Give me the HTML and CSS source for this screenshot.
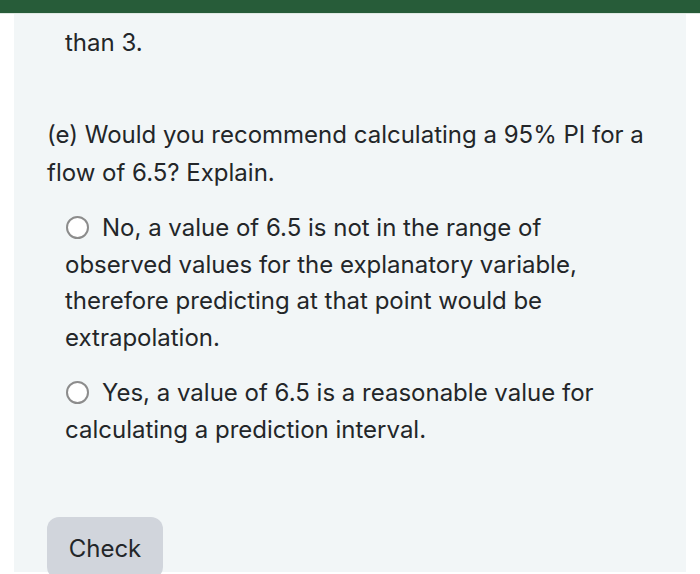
FILE: index.html
```html
<!DOCTYPE html>
<html lang="en">
<head>
<meta charset="utf-8">
<link rel="stylesheet" href="styles.css">
<title>Question</title>
</head>
<body>
<div class="topbar"></div>
<main class="panel">
  <p class="prev">than 3.</p>
  <p class="question">(e) Would you recommend calculating a 95% PI for a flow of 6.5? Explain.</p>
  <div class="options">
    <label class="option"><span class="radio"></span>No, a value of 6.5 is not in the range of observed values for the explanatory variable, therefore predicting at that point would be extrapolation.</label>
    <label class="option"><span class="radio"></span>Yes, a value of 6.5 is a reasonable value for calculating a prediction interval.</label>
  </div>
  <button class="check">Check</button>
</main>
</body>
</html>
```
FILE: styles.css
```css
html, body {
  margin: 0;
  padding: 0;
  background: #ffffff;
  height: 574px;
  overflow: hidden;
}
body {
  font-family: Inter, "Noto Sans", "Liberation Sans", sans-serif;
  color: #232629;
}
.topbar {
  height: 13px;
  background: #275c39;
  border-bottom: 1px solid #dfe9e3;
}
.panel {
  margin: 0 14px;
  background: #f2f6f7;
  padding: 14px 30px 0 33px;
  height: 558px;
  box-sizing: border-box;
}
.prev {
  margin: 0;
  padding-left: 18px;
  font-size: 24px;
  line-height: 30px;
}
.question {
  margin: 58px 0 0;
  font-size: 24px;
  line-height: 38px;
}
.options {
  display: flex;
  flex-direction: column;
  gap: 18px;
  margin-top: 18px;
  padding-left: 18px;
  padding-right: 46px;
}
.option {
  display: block;
  font-size: 24px;
  line-height: 36.7px;
}
.radio {
  display: inline-block;
  width: 19px;
  height: 19px;
  border: 2px solid #8c8c8c;
  border-radius: 50%;
  background: #fff;
  vertical-align: -3px;
  margin: 0 13px 0 1px;
}
.check {
  margin-top: 69px;
  font-family: inherit;
  font-size: 24px;
  color: #232629;
  background: #d1d5dc;
  border: none;
  border-radius: 12px;
  width: 116px;
  height: 62px;
  padding: 0;
}
```
